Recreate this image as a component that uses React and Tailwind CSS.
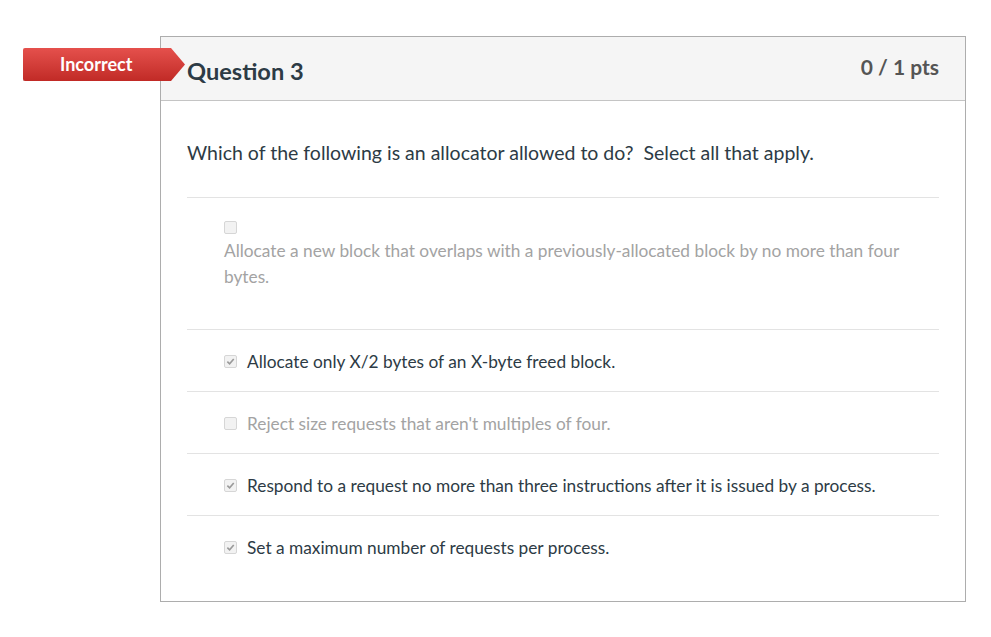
import React from 'react';

const answers = [
  { text: 'Allocate a new block that overlaps with a previously-allocated block by no more than four bytes.', checked: false, long: true },
  { text: 'Allocate only X/2 bytes of an X-byte freed block.', checked: true },
  { text: "Reject size requests that aren't multiples of four.", checked: false },
  { text: 'Respond to a request no more than three instructions after it is issued by a process.', checked: true },
  { text: 'Set a maximum number of requests per process.', checked: true },
];

const Box = ({ checked }) => (
  <span className="inline-flex w-[13px] h-[13px] shrink-0 items-center justify-center rounded-[2px] border border-[#d6d6d6] bg-[#f2f2f2]">
    {checked ? (
      <svg width="9" height="9" viewBox="0 0 10 10">
        <path d="M1.5 5.2 L4 7.6 L8.6 2.2" fill="none" stroke="#9a9a9a" strokeWidth="1.8" />
      </svg>
    ) : null}
  </span>
);

export default function App() {
  return (
    <div className="min-h-[637px] bg-white pt-9 pl-[160px] font-['Lato',sans-serif]">
      <div className="relative w-[806px] border border-[#adadad] bg-white">
        {/* result badge */}
        <div className="absolute left-[-138px] top-[11px] flex h-[33px] w-[162px] items-center pl-[37px] text-[18px] font-bold text-white bg-gradient-to-b from-[#e5504c] to-[#c12a26] shadow-[0_1px_2px_rgba(0,0,0,0.4)] [clip-path:polygon(0_0,148px_0,162px_50%,148px_100%,0_100%)] rounded-l-[2px]">
          Incorrect
        </div>

        <div className="flex h-[64px] items-start justify-between border-b border-[#c4c4c4] bg-[#f5f5f5] px-[26px]">
          <h2 className="mt-[17px] text-[23.6px] font-bold text-[#2d3b45]">Question 3</h2>
          <div className="mt-[14px] text-[21px] font-bold text-[#555]">0 / 1 pts</div>
        </div>

        <div className="px-[26px] pt-[39px] pb-[24px]">
          <p className="mb-[31px] text-[19.5px] leading-[26px] text-[#2d3b45]">
            Which of the following is an allocator allowed to do?&nbsp; Select all that apply.
          </p>

          {answers.map((a, i) => (
            <div key={i} className="border-t border-[#e3e3e3]">
              {a.long ? (
                <div className="pl-[37px] pr-[23px] pt-[18px] pb-[39px]">
                  <div className="flex h-[22px] items-center">
                    <Box checked={a.checked} />
                  </div>
                  <p className="text-[17.3px] leading-[26px] text-[#a3a3a3]">{a.text}</p>
                </div>
              ) : (
                <div className="flex h-[61px] items-center gap-[10px] pl-[37px] pt-[2px]">
                  <Box checked={a.checked} />
                  <span className={`text-[17.3px] leading-[26px] ${a.checked ? 'text-[#2d3b45]' : 'text-[#a3a3a3]'}`}>
                    {a.text}
                  </span>
                </div>
              )}
            </div>
          ))}
        </div>
      </div>
    </div>
  );
}
